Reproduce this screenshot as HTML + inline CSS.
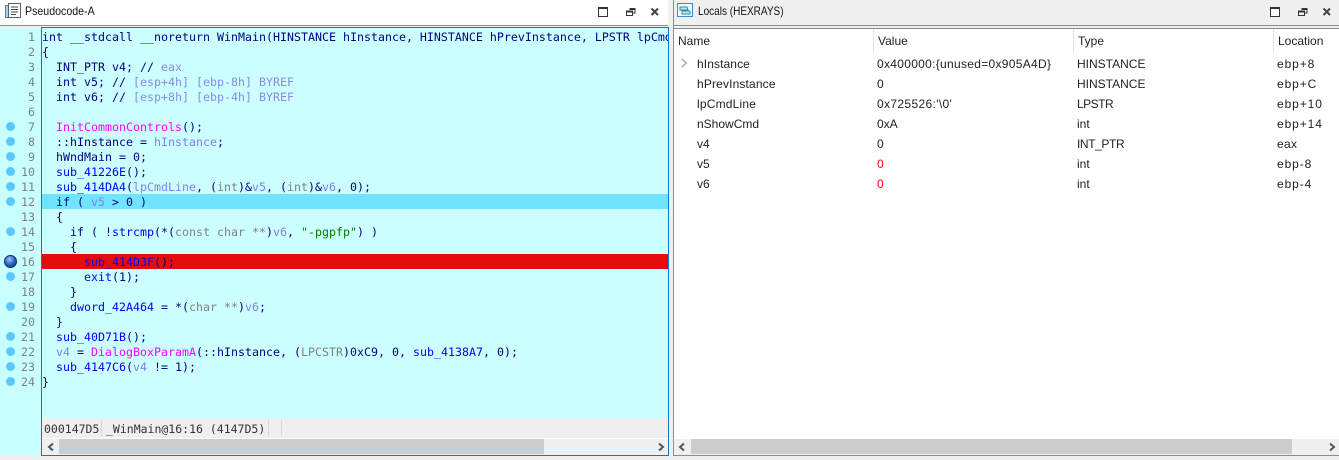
<!DOCTYPE html>
<html><head><meta charset="utf-8"><style>
*{margin:0;padding:0;box-sizing:border-box}
html,body{width:1339px;height:460px;overflow:hidden;background:#f0f0f0}
body{position:relative;font-family:"Liberation Sans",sans-serif}
.a{position:absolute}
#code{left:42px;top:29px;width:626px;height:389px;overflow:hidden}
.l{position:absolute;left:0;height:15px;line-height:15px;white-space:pre;font:11.63px/15px "DejaVu Sans Mono",monospace;color:#000080;padding-top:1px;height:16px}
.n{position:absolute;left:0;width:35px;text-align:right;font:11.63px/15px "DejaVu Sans Mono",monospace;color:#808080;padding-top:1px}
.d{position:absolute;left:6px;width:9px;height:9px;border-radius:50%;background:#5cc6ff;margin-top:1px}
.f{color:#0000ff}.v{color:#8080ee}.c{color:#808080}.p{color:#ff00ff}.s{color:#008000}.m{color:#8a8ae0}
.t{position:absolute;font-size:12px;line-height:16px;color:#222;white-space:pre}
.r{margin-top:1px}
.w{letter-spacing:.3px}.o{letter-spacing:.9px}
.h{position:absolute;top:29px;width:1px;height:23px;background:#e4e4e4}
</style></head><body>
<!-- left pane -->
<div class="a" style="left:0;top:0;width:668px;height:25px;background:#fff"></div>
<div class="a" style="left:0;top:25px;width:668px;height:1px;background:#8c8c8c"></div>
<div class="a" style="left:0;top:28px;width:41px;height:427px;background:#c8ffff"></div>
<div class="a" style="left:41px;top:27px;width:628px;height:429px;border:1px solid #0a78d2;background:#ccffff"></div>
<div class="t" style="left:25px;top:3px;color:#111;transform:scaleX(.885);transform-origin:0 0">Pseudocode-A</div>
<svg class="a" style="left:4px;top:2px" width="18" height="17" viewBox="0 0 18 17"><rect x="1.500" y="3.500" width="11" height="12" fill="#9fd4ff" stroke="#3a8ad6"/><rect x="4.500" y="1.500" width="12" height="14" fill="#fff" stroke="#566"/><path d="M7 5h7M7 7.500h7M7 10h7M7 12.500h5" stroke="#445" fill="none"/></svg>
<svg class="a" style="left:598px;top:6px" width="66" height="12" viewBox="0 0 66 12"><rect x=".5" y="1.500" width="9" height="9" fill="#fff" stroke="#333"/><rect x="0" y="1" width="10" height="2" fill="#333"/><path d="M31.500 2.500h5.500v4.500h-2M28.500 5h6v4.500h-6z" fill="none" stroke="#333"/><path d="M31.500 3.500h5.500M28.500 6h6" stroke="#333"/><path d="M53.500 2.500l6.500 6.500M60 2.500l-6.500 6.500" stroke="#444" stroke-width="2" fill="none"/></svg>
<div id="code" class="a">
<div class="a" style="left:0;top:165px;width:626px;height:15px;background:#70e4ff"></div>
<div class="a" style="left:0;top:225px;width:626px;height:15px;background:#e60c0c"></div>
<div class="l" style="top:0">int __stdcall __noreturn WinMain(HINSTANCE hInstance, HINSTANCE hPrevInstance, LPSTR lpCmdLine, int nShowCmd)</div>
<div class="l" style="top:15px">{</div>
<div class="l" style="top:30px">  INT_PTR v4; // <span class="m">eax</span></div>
<div class="l" style="top:45px">  int v5; // <span class="m">[esp+4h] [ebp-8h] BYREF</span></div>
<div class="l" style="top:60px">  int v6; // <span class="m">[esp+8h] [ebp-4h] BYREF</span></div>
<div class="l" style="top:90px">  <span class="p">InitCommonControls</span>();</div>
<div class="l" style="top:105px">  ::hInstance = <span class="v">hInstance</span>;</div>
<div class="l" style="top:120px">  hWndMain = 0;</div>
<div class="l" style="top:135px">  <span class="f">sub_41226E</span>();</div>
<div class="l" style="top:150px">  <span class="f">sub_414DA4</span>(<span class="v">lpCmdLine</span>, (<span class="c">int</span>)&amp;<span class="v">v5</span>, (<span class="c">int</span>)&amp;<span class="v">v6</span>, 0);</div>
<div class="l" style="top:165px">  if ( <span class="v">v5</span> &gt; 0 )</div>
<div class="l" style="top:180px">  {</div>
<div class="l" style="top:195px">    if ( !<span class="f">strcmp</span>(*(<span class="c">const char **</span>)<span class="v">v6</span>, <span class="s">"-pgpfp"</span>) )</div>
<div class="l" style="top:210px">    {</div>
<div class="l" style="top:225px">      <span class="f">sub_414D3F</span>();</div>
<div class="l" style="top:240px">      <span class="f">exit</span>(1);</div>
<div class="l" style="top:255px">    }</div>
<div class="l" style="top:270px">    <span class="f">dword_42A464</span> = *(<span class="c">char **</span>)<span class="v">v6</span>;</div>
<div class="l" style="top:285px">  }</div>
<div class="l" style="top:300px">  <span class="f">sub_40D71B</span>();</div>
<div class="l" style="top:315px">  <span class="v">v4</span> = <span class="p">DialogBoxParamA</span>(::hInstance, (<span class="c">LPCSTR</span>)0xC9, 0, <span class="f">sub_4138A7</span>, 0);</div>
<div class="l" style="top:330px">  <span class="f">sub_4147C6</span>(<span class="v">v4</span> != 1);</div>
<div class="l" style="top:345px">}</div>
</div>
<div class="a" style="left:0;top:29px;width:41px;height:362px">
<div class="n" style="top:0">1</div><div class="n" style="top:15px">2</div><div class="n" style="top:30px">3</div><div class="n" style="top:45px">4</div><div class="n" style="top:60px">5</div><div class="n" style="top:75px">6</div><div class="n" style="top:90px">7</div><div class="n" style="top:105px">8</div><div class="n" style="top:120px">9</div><div class="n" style="top:135px">10</div><div class="n" style="top:150px">11</div><div class="n" style="top:165px">12</div><div class="n" style="top:180px">13</div><div class="n" style="top:195px">14</div><div class="n" style="top:210px">15</div><div class="n" style="top:225px">16</div><div class="n" style="top:240px">17</div><div class="n" style="top:255px">18</div><div class="n" style="top:270px">19</div><div class="n" style="top:285px">20</div><div class="n" style="top:300px">21</div><div class="n" style="top:315px">22</div><div class="n" style="top:330px">23</div><div class="n" style="top:345px">24</div>
<div class="d" style="top:92px"></div><div class="d" style="top:107px"></div><div class="d" style="top:122px"></div><div class="d" style="top:137px"></div><div class="d" style="top:152px"></div><div class="d" style="top:167px"></div><div class="d" style="top:197px"></div><div class="d" style="top:242px"></div><div class="d" style="top:272px"></div><div class="d" style="top:302px"></div><div class="d" style="top:317px"></div><div class="d" style="top:332px"></div><div class="d" style="top:347px"></div>
<div class="a" style="left:4px;top:226px;width:13px;height:13px;border-radius:50%;background:radial-gradient(circle at 40% 30%,#9cc4f4,#2a66c8 50%,#0c2c70);border:1px solid #0c2c60"></div>
</div>
<!-- status bar -->
<div class="a" style="left:42px;top:418px;width:626px;height:20px;background:#efefef"></div>
<div class="a" style="left:42px;top:438px;width:626px;height:1px;background:#fff"></div>
<div class="a" style="left:101px;top:420px;width:1px;height:16px;background:#d8d8d8"></div>
<div class="a" style="left:268px;top:420px;width:1px;height:16px;background:#d8d8d8"></div>
<div class="a" style="left:281px;top:420px;width:1px;height:16px;background:#d8d8d8"></div>
<div class="l" style="left:44px;top:421px;color:#333;font-size:11.5px">000147D5</div>
<div class="l" style="left:106px;top:421px;color:#333;font-size:11.5px">_WinMain@16:16 (4147D5)</div>
<!-- left scrollbar -->
<div class="a" style="left:42px;top:439px;width:626px;height:16px;background:#f0f0f0"></div>
<div class="a" style="left:59px;top:439px;width:485px;height:15px;background:#cdcdcd"></div>
<svg class="a" style="left:46px;top:442px" width="10" height="10"><path d="M7 1.500L3 5l4 3.500" fill="none" stroke="#555" stroke-width="2"/></svg>
<svg class="a" style="left:656px;top:442px" width="10" height="10"><path d="M3 1.500L7 5l-4 3.500" fill="none" stroke="#555" stroke-width="2"/></svg>
<!-- right pane -->
<div class="a" style="left:673px;top:0;width:666px;height:25px;background:#f0f0f0"></div>
<div class="a" style="left:673px;top:0;width:1px;height:456px;background:#8c8c8c"></div>
<div class="a" style="left:673px;top:25px;width:666px;height:1px;background:#8c8c8c"></div>
<div class="a" style="left:674px;top:28px;width:665px;height:411px;background:#fff"></div>
<div class="a" style="left:673px;top:28px;width:666px;height:1px;background:#8c8c8c"></div>
<svg class="a" style="left:677px;top:3px" width="17" height="15" viewBox="0 0 17 15"><rect x=".5" y=".5" width="15" height="13" fill="#eef6ff" stroke="#3a8ad6"/><path d="M3 4h7l1 3H3zM5 8h8v3H5z" fill="#bfe4ea" stroke="#2f8f9f"/></svg>
<div class="t" style="left:698px;top:3px;color:#111;transform:scaleX(.835);transform-origin:0 0">Locals (HEXRAYS)</div>
<svg class="a" style="left:1270px;top:6px" width="66" height="12" viewBox="0 0 66 12"><rect x=".5" y="1.500" width="9" height="9" fill="#fff" stroke="#333"/><rect x="0" y="1" width="10" height="2" fill="#333"/><path d="M31.500 2.500h5.500v4.500h-2M28.500 5h6v4.500h-6z" fill="none" stroke="#333"/><path d="M31.500 3.500h5.500M28.500 6h6" stroke="#333"/><path d="M53.500 2.500l6.500 6.500M60 2.500l-6.500 6.500" stroke="#444" stroke-width="2" fill="none"/></svg>
<div class="h" style="left:873px"></div><div class="h" style="left:1073px"></div><div class="h" style="left:1273px"></div>
<div class="t" style="left:678px;top:33px">Name</div><div class="t" style="left:878px;top:33px">Value</div><div class="t" style="left:1078px;top:33px">Type</div><div class="t" style="left:1278px;top:33px">Location</div>
<svg class="a" style="left:680px;top:58px" width="8" height="10"><path d="M2 1l4 4-4 4" fill="none" stroke="#aaa" stroke-width="1.500"/></svg>
<div class="t r" style="left:697px;top:55px;letter-spacing:.1px">hInstance</div><div class="t r w" style="left:877px;top:55px">0x400000:{unused=0x905A4D}</div><div class="t r" style="left:1077px;top:55px">HINSTANCE</div><div class="t r o" style="left:1277px;top:55px">ebp+8</div>
<div class="t r" style="left:697px;top:75px;letter-spacing:.15px">hPrevInstance</div><div class="t r" style="left:877px;top:75px">0</div><div class="t r" style="left:1077px;top:75px">HINSTANCE</div><div class="t r o" style="left:1277px;top:75px">ebp+C</div>
<div class="t r" style="left:697px;top:95px;letter-spacing:.2px">lpCmdLine</div><div class="t r" style="left:877px;top:95px;letter-spacing:.35px">0x725526:'\0'</div><div class="t r" style="left:1077px;top:95px;letter-spacing:-.5px">LPSTR</div><div class="t r o" style="left:1277px;top:95px">ebp+10</div>
<div class="t r" style="left:697px;top:115px">nShowCmd</div><div class="t r" style="left:877px;top:115px">0xA</div><div class="t r" style="left:1077px;top:115px">int</div><div class="t r o" style="left:1277px;top:115px">ebp+14</div>
<div class="t r" style="left:697px;top:135px">v4</div><div class="t r" style="left:877px;top:135px">0</div><div class="t r" style="left:1077px;top:135px;letter-spacing:-.4px">INT_PTR</div><div class="t r" style="left:1277px;top:135px;letter-spacing:.3px">eax</div>
<div class="t r" style="left:697px;top:155px">v5</div><div class="t r" style="left:877px;top:155px;color:#ff0000">0</div><div class="t r" style="left:1077px;top:155px">int</div><div class="t r o" style="left:1277px;top:155px">ebp-8</div>
<div class="t r" style="left:697px;top:175px">v6</div><div class="t r" style="left:877px;top:175px;color:#ff0000">0</div><div class="t r" style="left:1077px;top:175px">int</div><div class="t r o" style="left:1277px;top:175px">ebp-4</div>
<!-- right scrollbar -->
<div class="a" style="left:674px;top:439px;width:665px;height:16px;background:#f0f0f0"></div>
<div class="a" style="left:691px;top:439px;width:601px;height:15px;background:#cdcdcd"></div>
<div class="a" style="left:673px;top:455px;width:666px;height:1px;background:#8c8c8c"></div>
<svg class="a" style="left:677px;top:442px" width="10" height="10"><path d="M7 1.500L3 5l4 3.500" fill="none" stroke="#555" stroke-width="2"/></svg>
<svg class="a" style="left:1327px;top:442px" width="10" height="10"><path d="M3 1.500L7 5l-4 3.500" fill="none" stroke="#555" stroke-width="2"/></svg>
</body></html>
